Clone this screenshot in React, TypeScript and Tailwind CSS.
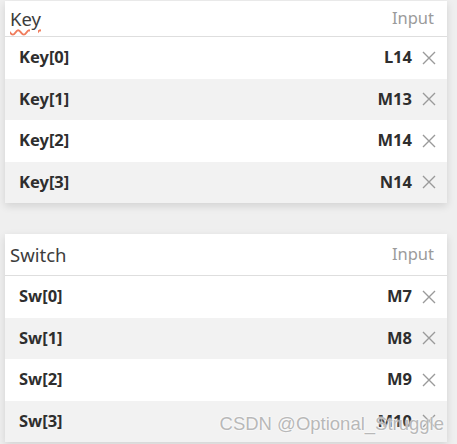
import { ReactNode } from "react";

interface Pin {
  name: string;
  loc: string;
}

const keys: Pin[] = [
  { name: "Key[0]", loc: "L14" },
  { name: "Key[1]", loc: "M13" },
  { name: "Key[2]", loc: "M14" },
  { name: "Key[3]", loc: "N14" },
];

const switches: Pin[] = [
  { name: "Sw[0]", loc: "M7" },
  { name: "Sw[1]", loc: "M8" },
  { name: "Sw[2]", loc: "M9" },
  { name: "Sw[3]", loc: "M10" },
];

function CloseIcon() {
  return (
    <svg width="14" height="14" viewBox="0 0 14 14" className="shrink-0">
      <path d="M1 1 L13 13 M13 1 L1 13" stroke="#9a9a9a" strokeWidth="1.4" fill="none" />
    </svg>
  );
}

function PortCard({
  title,
  pins,
  headerClass,
}: {
  title: ReactNode;
  pins: Pin[];
  headerClass: string;
}) {
  return (
    <div className="bg-white shadow-[0_3px_8px_rgba(0,0,0,0.12)]">
      <div
        className={`flex items-center justify-between pl-[5px] pr-[13px] border-b border-[#dedede] ${headerClass}`}
      >
        <span className="text-[18.5px] text-[#3c3c3c]">{title}</span>
        <span className="text-[16.5px] text-[#9b9b9b]">Input</span>
      </div>
      {pins.map((p, i) => (
        <div
          key={p.name}
          className={`flex items-center h-[41.5px] pl-[14px] pr-[11px] ${
            i % 2 === 1 ? "bg-[#f2f2f2]" : "bg-white"
          }`}
        >
          <span className="flex-1 text-[16.5px] font-bold text-[#2e2e2e]">{p.name}</span>
          <span className="text-[16.5px] font-bold text-[#2e2e2e] mr-[10px]">{p.loc}</span>
          <CloseIcon />
        </div>
      ))}
    </div>
  );
}

export default function App() {
  return (
    <div
      className="relative w-[457px] h-[444px] overflow-hidden bg-[#efefef] pl-[5px] pr-[10px] pt-[1px]"
      style={{ fontFamily: '"Noto Sans", "Open Sans", sans-serif' }}
    >
      <div className="flex flex-col gap-[31px]">
        <PortCard
          headerClass="h-[36px]"
          title={
            <span className="underline decoration-wavy decoration-[#f07c5c] decoration-[1.5px] underline-offset-[3px]">
              Key
            </span>
          }
          pins={keys}
        />
        <PortCard headerClass="h-[42px]" title="Switch" pins={switches} />
      </div>
      <div
        className="absolute right-[13px] bottom-[6px] text-[18.5px] text-[#b8b8b8] [text-shadow:0_0_2px_#fff,0_0_2px_#fff]"
        style={{ fontFamily: '"Liberation Sans", Arial, sans-serif' }}
      >
        CSDN @Optional_Struggle
      </div>
    </div>
  );
}
